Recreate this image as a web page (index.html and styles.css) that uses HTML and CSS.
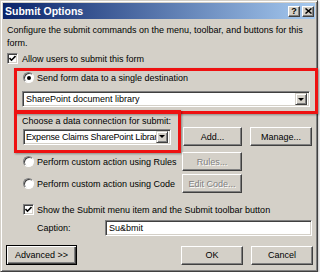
FILE: index.html
```html
<!DOCTYPE html>
<html>
<head>
<meta charset="utf-8">
<link rel="stylesheet" href="styles.css">
</head>
<body>
<div class="dialog">
  <div class="titlebar">
    <span class="title">Submit Options</span>
    <div class="tbtns">
      <span class="tbtn">?</span>
      <span class="tbtn"><svg width="7" height="6" viewBox="0 0 7 6"><path d="M0.5 0.5 L6.5 5.5 M6.5 0.5 L0.5 5.5" stroke="#000" stroke-width="1.5" fill="none"/></svg></span>
    </div>
  </div>
  <div class="content">
    <p class="desc">Configure the submit commands on the menu, toolbar, and buttons for this form.</p>
    <div class="row allow">
      <span class="checkbox"><svg width="7" height="7" viewBox="0 0 7 7"><path d="M0.5 3 L2.5 5.2 L6.5 1" stroke="#000" stroke-width="1.6" fill="none"/></svg></span>
      <span>Allow users to submit this form</span>
    </div>
    <div class="group">
      <div class="row r1">
        <span class="radio on"></span>
        <span>Send form data to a single destination</span>
      </div>
      <div class="combo wide">
        <span class="combo-text">SharePoint document library</span>
        <span class="drop"><span class="tri"></span></span>
      </div>
      <div class="choose">Choose a data connection for submit:</div>
      <div class="row btn-row add-row">
        <div class="combo narrow">
          <span class="combo-text tight">Expense Claims SharePoint Library</span>
          <span class="drop"><span class="tri"></span></span>
        </div>
        <button class="btn add">Add...</button>
        <button class="btn manage">Manage...</button>
      </div>
      <div class="row btn-row rules-row">
        <div class="opt"><span class="radio"></span><span>Perform custom action using Rules</span></div>
        <button class="btn disabled">Rules...</button>
      </div>
      <div class="row btn-row code-row">
        <div class="opt"><span class="radio"></span><span>Perform custom action using Code</span></div>
        <button class="btn disabled">Edit Code...</button>
      </div>
      <div class="row show">
        <span class="checkbox"><svg width="7" height="7" viewBox="0 0 7 7"><path d="M0.5 3 L2.5 5.2 L6.5 1" stroke="#000" stroke-width="1.6" fill="none"/></svg></span>
        <span>Show the Submit menu item and the Submit toolbar button</span>
      </div>
      <div class="row caption-row">
        <span class="caption-label">Caption:</span>
        <div class="field">Su&amp;bmit</div>
      </div>
    </div>
    <div class="footer">
      <button class="btn default adv">Advanced &gt;&gt;</button>
      <span class="spacer"></span>
      <button class="btn ok">OK</button>
      <button class="btn cancel">Cancel</button>
    </div>
  </div>
  <div class="hl hl1"></div>
  <div class="hl hl2"></div>
</div>
</body>
</html>
```
FILE: styles.css
```css
body {
  margin: 0;
  background: #ffffff;
  font-family: "Liberation Sans", Arial, sans-serif;
  font-size: 9px;
  color: #000;
}
.dialog {
  position: relative;
  width: 318px;
  height: 272px;
  box-sizing: border-box;
  background: #d4d0c8;
  border: 1px solid;
  border-color: #d4d0c8 #404040 #404040 #d4d0c8;
  box-shadow: inset 1px 1px #ffffff, inset -1px -1px #808080, 1px 1px 2px rgba(0,0,0,0.25);
  padding: 2px;
  display: flex;
  flex-direction: column;
}
.titlebar {
  height: 16px;
  flex: none;
  background: linear-gradient(to right, #0a246a, #a6caf0);
  display: flex;
  align-items: center;
  justify-content: space-between;
  padding: 0 1px 0 2px;
}
.title {
  color: #fff;
  font-weight: bold;
  font-size: 10.5px;
}
.tbtns {
  display: flex;
  gap: 2px;
}
.tbtn {
  width: 12px;
  height: 11px;
  box-sizing: border-box;
  background: #d4d0c8;
  border: 1px solid;
  border-color: #fff #404040 #404040 #fff;
  box-shadow: inset -1px -1px #808080;
  display: flex;
  align-items: center;
  justify-content: center;
  font-weight: bold;
  font-size: 9px;
  line-height: 9px;
}
.content {
  flex: 1;
  padding: 0 2px 0 4px;
  display: flex;
  flex-direction: column;
}
.desc {
  margin: 5px 0 0;
  line-height: 13px;
}
.row {
  display: flex;
  align-items: center;
}
.allow {
  height: 11px;
  margin-top: 3px;
}
.checkbox {
  width: 11px;
  height: 11px;
  box-sizing: border-box;
  background: #fff;
  border: 1px solid;
  border-color: #808080 #fff #fff #808080;
  box-shadow: inset 1px 1px #404040, inset -1px -1px #d4d0c8;
  display: flex;
  align-items: center;
  justify-content: center;
  margin-right: 4px;
  flex: none;
}
.group {
  padding-left: 15px;
  display: flex;
  flex-direction: column;
}
.radio {
  width: 11px;
  height: 11px;
  box-sizing: border-box;
  border-radius: 50%;
  background: #fff;
  border: 1px solid;
  border-color: #808080 #fff #fff #808080;
  box-shadow: inset 1px 1px #404040;
  margin: 0 3px 0 1px;
  flex: none;
  position: relative;
}
.radio.on::after {
  content: "";
  position: absolute;
  left: 3px;
  top: 3px;
  width: 4px;
  height: 4px;
  border-radius: 50%;
  background: #000;
}
.r1 {
  height: 13px;
  margin-top: 7px;
}
.combo {
  height: 16px;
  box-sizing: border-box;
  background: #fff;
  border: 1px solid;
  border-color: #808080 #fff #fff #808080;
  box-shadow: inset 1px 1px #404040, inset -1px -1px #d4d0c8;
  display: flex;
  align-items: center;
  padding: 2px 2px 2px 3px;
  flex: none;
}
.combo.wide {
  width: 288px;
  margin-top: 7px;
}
.combo.narrow {
  width: 148px;
  margin-left: 1px;
  padding-left: 2px;
}
.combo-text {
  flex: 1;
  overflow: hidden;
  white-space: nowrap;
}
.combo-text.tight {
  letter-spacing: -0.2px;
}
.drop {
  width: 12px;
  height: 12px;
  box-sizing: border-box;
  flex: none;
  background: #d4d0c8;
  border: 1px solid;
  border-color: #d4d0c8 #404040 #404040 #d4d0c8;
  box-shadow: inset 1px 1px #fff, inset -1px -1px #808080;
  display: flex;
  align-items: center;
  justify-content: center;
}
.tri {
  width: 0;
  height: 0;
  border-left: 3px solid transparent;
  border-right: 3px solid transparent;
  border-top: 3px solid #000;
}
.choose {
  margin-top: 8px;
  line-height: 12px;
  height: 12px;
}
.btn-row {
  height: 19px;
}
.btn {
  font-family: "Liberation Sans", Arial, sans-serif;
  font-size: 9px;
  color: #000;
  height: 19px;
  box-sizing: border-box;
  background: #d4d0c8;
  border: 1px solid;
  border-color: #fff #404040 #404040 #fff;
  box-shadow: inset -1px -1px #808080;
  padding: 0;
  margin: 0;
  flex: none;
  width: 60px;
}
.add {
  margin-left: 12px;
  width: 59px;
}
.manage {
  margin-left: 8px;
  width: 62px;
}
.opt {
  width: 160px;
  display: flex;
  align-items: center;
  flex: none;
}
.rules-row {
  margin-top: 6px;
}
.code-row {
  margin-top: 3px;
}
.btn.disabled {
  color: #808080;
  text-shadow: 1px 1px #fff;
}
.show {
  height: 11px;
  margin-top: 11px;
}
.show .checkbox {
  margin-left: 1px;
  margin-right: 3px;
}
.caption-row {
  height: 16px;
  margin-top: 5px;
}
.caption-label {
  width: 68px;
  padding-left: 15px;
  flex: none;
}
.field {
  width: 207px;
  height: 16px;
  box-sizing: border-box;
  background: #fff;
  border: 1px solid;
  border-color: #808080 #fff #fff #808080;
  box-shadow: inset 1px 1px #404040, inset -1px -1px #d4d0c8;
  padding: 0 3px;
  line-height: 14px;
}
.footer {
  display: flex;
  align-items: center;
  height: 20px;
  margin-top: 9px;
  margin-left: -1px;
}
.spacer {
  flex: 1;
}
.btn.default {
  height: 20px;
  width: 71px;
  border: 1px solid #000;
  box-shadow: inset 1px 1px #fff, inset -1px -1px #404040, inset -2px -2px #808080;
}
.ok {
  width: 62px;
}
.cancel {
  width: 62px;
  margin-left: 8px;
}
.hl {
  position: absolute;
  box-sizing: border-box;
  border: 3px solid #ee1111;
  box-shadow: 1px 1px 2px rgba(0,0,0,0.35);
}
.hl1 {
  left: 13px;
  top: 67px;
  width: 304px;
  height: 46px;
}
.hl2 {
  left: 13px;
  top: 109px;
  width: 167px;
  height: 43px;
}
```
